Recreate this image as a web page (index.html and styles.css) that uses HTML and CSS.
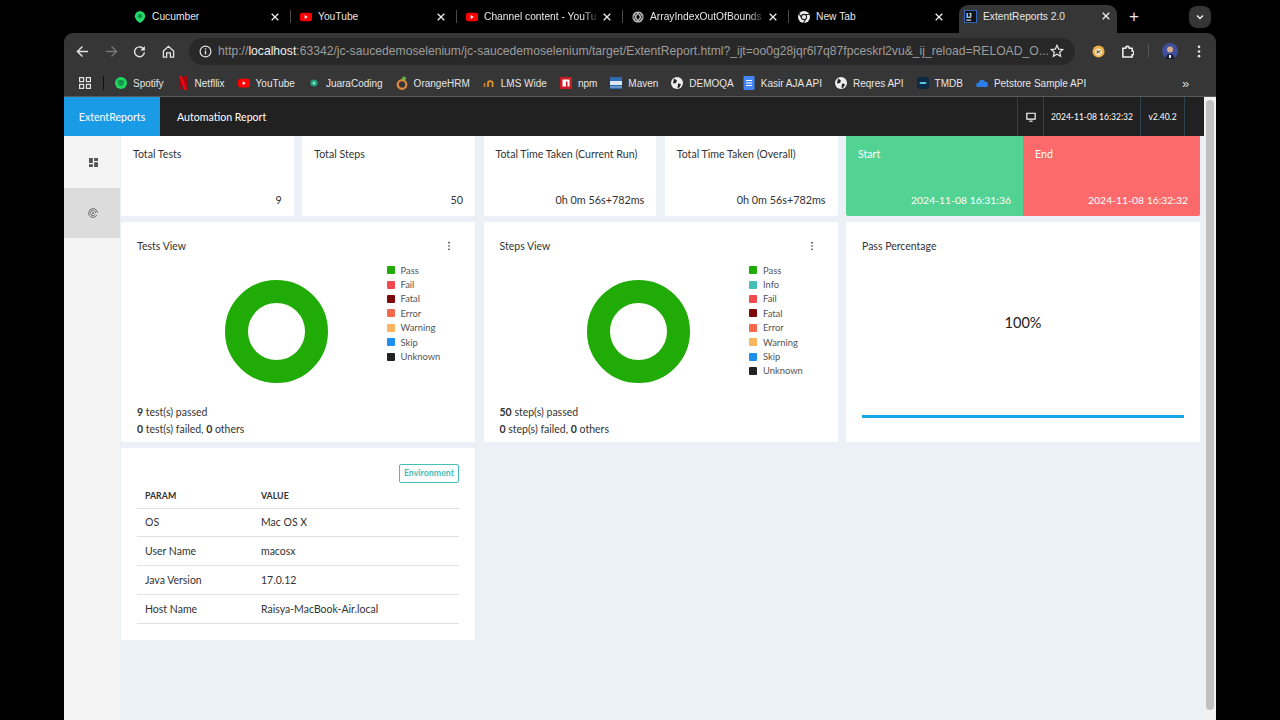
FILE: index.html
```html
<!DOCTYPE html>
<html lang="en">
<head>
    <meta charset="UTF-8">
    <title>ExtentReports 2.0</title>
    <link rel="stylesheet" href="styles.css">
</head>
<body>
<div class="window">
    <div class="tabstrip">
        <div class="tab">
            <svg class="fav" viewBox="0 0 12 14"><path d="M6 0a6 6 0 0 1 6 6c0 3.500-3 6-6 8-3-2-6-4.500-6-8a6 6 0 0 1 6-6z" fill="#23d96c"/><circle cx="6" cy="6" r="2.500" fill="#0e8f44"/></svg>
            <span class="tab-title">Cucumber</span><svg class="tab-x" viewBox="0 0 8 8"><path d="M.7.7l6.600 6.600M7.300.7L.7 7.300" stroke="#eee" stroke-width="1.300"/></svg>
        </div>
        <div class="tab">
            <svg class="fav" viewBox="0 0 14 12"><rect y="1" width="14" height="10" rx="2.500" fill="#f00"/><path d="M5.500 3.800v4.400L9 6z" fill="#fff"/></svg>
            <span class="tab-title">YouTube</span><svg class="tab-x" viewBox="0 0 8 8"><path d="M.7.7l6.600 6.600M7.300.7L.7 7.300" stroke="#eee" stroke-width="1.300"/></svg>
        </div>
        <div class="tab">
            <svg class="fav" viewBox="0 0 14 12"><rect y="1" width="14" height="10" rx="2.500" fill="#f00"/><path d="M5.500 3.800v4.400L9 6z" fill="#fff"/></svg>
            <span class="tab-title fade">Channel content - YouTu</span><svg class="tab-x" viewBox="0 0 8 8"><path d="M.7.7l6.600 6.600M7.300.7L.7 7.300" stroke="#eee" stroke-width="1.300"/></svg>
        </div>
        <div class="tab">
            <svg class="fav" viewBox="0 0 12 12"><g fill="none" stroke="#bbb" stroke-width="1.200"><circle cx="6" cy="6" r="5"/><ellipse cx="6" cy="6" rx="5" ry="2.200" transform="rotate(60 6 6)"/><ellipse cx="6" cy="6" rx="5" ry="2.200" transform="rotate(-60 6 6)"/></g></svg>
            <span class="tab-title fade">ArrayIndexOutOfBounds</span><svg class="tab-x" viewBox="0 0 8 8"><path d="M.7.7l6.600 6.600M7.300.7L.7 7.300" stroke="#eee" stroke-width="1.300"/></svg>
        </div>
        <div class="tab">
            <svg class="fav" viewBox="0 0 12 12"><circle cx="6" cy="6" r="6" fill="#eee"/><path d="M6 3.500h5.500M3.800 7.300L1 2.400M8.200 7.300L5.400 12" stroke="#222" stroke-width="1.100"/><circle cx="6" cy="6" r="2.600" fill="#eee" stroke="#222" stroke-width="1.100"/></svg>
            <span class="tab-title">New Tab</span><svg class="tab-x" viewBox="0 0 8 8"><path d="M.7.7l6.600 6.600M7.300.7L.7 7.300" stroke="#eee" stroke-width="1.300"/></svg>
        </div>
        <div class="tab tab-active">
            <svg class="fav fav-ij" viewBox="0 0 13 13"><rect width="13" height="13" fill="#111"/><path d="M0 0h13v13H0z" fill="none" stroke="#3b7de8" stroke-width="1.600"/><text x="2.200" y="7.500" font-size="6.500" font-weight="700" font-family="Liberation Sans, sans-serif" fill="#fff">IJ</text><rect x="2.200" y="9.600" width="5" height="1" fill="#fff"/></svg>
            <span class="tab-title">ExtentReports 2.0</span><svg class="tab-x" viewBox="0 0 8 8"><path d="M.7.7l6.600 6.600M7.300.7L.7 7.300" stroke="#eee" stroke-width="1.300"/></svg>
        </div>
        <span class="new-tab">+</span>
        <span class="tab-menu"><svg viewBox="0 0 10 10" width="10" height="10"><path d="M2 3.500l3 3 3-3" fill="none" stroke="#eee" stroke-width="1.500"/></svg></span>
    </div>

    <div class="toolbar">
        <svg class="tool" viewBox="0 0 14 14"><path d="M13 7H2M7 1.500L1.500 7 7 12.500" fill="none" stroke="#e4e4e4" stroke-width="1.500"/></svg>
        <svg class="tool" viewBox="0 0 14 14"><path d="M1 7h11M7 1.500L12.500 7 7 12.500" fill="none" stroke="#777" stroke-width="1.500"/></svg>
        <svg class="tool" viewBox="0 0 14 14"><path d="M11.800 5A5.300 5.300 0 1 0 12.300 8" fill="none" stroke="#e4e4e4" stroke-width="1.500"/><path d="M12.800 1v4.800H8z" fill="#e4e4e4"/></svg>
        <svg class="tool" viewBox="0 0 14 14"><path d="M1.500 6.500L7 1.500l5.500 5V13H9V8.500H5V13H1.500z" fill="none" stroke="#e4e4e4" stroke-width="1.400"/></svg>
        <div class="omnibox">
            <span class="site-info"><svg viewBox="0 0 14 14" width="13" height="13"><circle cx="7" cy="7" r="5.800" fill="none" stroke="#e4e4e4" stroke-width="1.300"/><path d="M7 6v4.200M7 3.600v1.300" stroke="#e4e4e4" stroke-width="1.400"/></svg></span>
            <span class="url">http://<b>localhost</b>:63342/jc-saucedemoselenium/jc-saucedemoselenium/target/ExtentReport.html?_ijt=oo0g28jqr6l7q87fpceskrl2vu&amp;_ij_reload=RELOAD_O...</span>
            <svg class="star" viewBox="0 0 14 14"><path d="M7 1.300l1.700 3.800 4.100.4-3.100 2.700.9 4.100L7 10.200l-3.600 2.100.9-4.100L1.200 5.500l4.100-.4z" fill="none" stroke="#e4e4e4" stroke-width="1.200"/></svg>
        </div>
        <svg class="ext" viewBox="0 0 14 14"><circle cx="7" cy="7" r="6.500" fill="#eeb04a"/><circle cx="7" cy="7.500" r="3.800" fill="#f4e6c8"/><path d="M5 6l4 3M9 6l-4 3" stroke="#5b3a1a" stroke-width="1.100"/></svg>
        <svg class="ext ext-puzzle" viewBox="0 0 14 14"><path d="M2 3.500h3a2 2 0 0 1 4 0h3v3a2 2 0 0 1 0 4V13H2z" fill="none" stroke="#eee" stroke-width="1.700"/></svg>
        <span class="tool-sep"></span>
        <svg class="avatar" viewBox="0 0 16 16"><circle cx="8" cy="8" r="8" fill="#3f4f9a"/><circle cx="8" cy="6.500" r="3" fill="#d8a98c"/><path d="M3.500 16c.5-4 2.500-5 4.500-5s4 1 4.500 5z" fill="#1a1f3a"/><rect x="7" y="12" width="2" height="3" fill="#eee"/></svg>
        <svg class="dots" viewBox="0 0 4 14"><circle cx="2" cy="2" r="1.400" fill="#e4e4e4"/><circle cx="2" cy="7" r="1.400" fill="#e4e4e4"/><circle cx="2" cy="12" r="1.400" fill="#e4e4e4"/></svg>
    </div>

    <div class="bookmarks">
        <svg class="apps" viewBox="0 0 12 12"><g fill="none" stroke="#e4e4e4" stroke-width="1.200"><rect x=".6" y=".6" width="4" height="4"/><rect x="7.400" y=".6" width="4" height="4"/><rect x=".6" y="7.400" width="4" height="4"/><rect x="7.400" y="7.400" width="4" height="4"/></g></svg>
        <span class="bm-sep"></span>
        <div class="bm"><svg viewBox="0 0 12 12"><circle cx="6" cy="6" r="6" fill="#1ed760"/><path d="M2.800 4.200c2-.6 4.500-.4 6.400.6M3.200 6c1.700-.5 3.800-.3 5.400.6M3.600 7.800c1.400-.4 3-.2 4.300.5" fill="none" stroke="#153" stroke-width="1"/></svg>Spotify</div>
        <div class="bm"><svg viewBox="0 0 12 14"><path d="M2 0h3v13.400L2 14zM7 0h3v14l-3-.6z" fill="#a3060e"/><path d="M2 0h3l5 14H7z" fill="#e50914"/></svg>Netfllix</div>
        <div class="bm"><svg viewBox="0 0 14 12"><rect y="1" width="14" height="10" rx="2.500" fill="#f00"/><path d="M5.500 3.800v4.400L9 6z" fill="#fff"/></svg>YouTube</div>
        <div class="bm"><svg viewBox="0 0 12 12"><circle cx="6" cy="6" r="3.600" fill="#1f9d7a"/><circle cx="6" cy="6" r="1.500" fill="#8fe3c8"/></svg>JuaraCoding</div>
        <div class="bm"><svg viewBox="0 0 12 14"><circle cx="6" cy="8.500" r="4.300" fill="none" stroke="#e28a3c" stroke-width="2.200"/><circle cx="8" cy="2.500" r="2" fill="#6cb33f"/></svg>OrangeHRM</div>
        <div class="bm"><svg viewBox="0 0 12 12"><path d="M1.500 10V6" stroke="#c9761f" stroke-width="1.800"/><path d="M5 10V6.500a2.300 2.300 0 0 1 4.600 0V10" fill="none" stroke="#e0912a" stroke-width="1.800"/></svg>LMS Wide</div>
        <div class="bm"><svg viewBox="0 0 12 12"><rect width="12" height="12" fill="#cb1a22"/><path d="M2.500 2.500h7v7H7.500V4.500H6v5H2.500z" fill="#fff"/></svg>npm</div>
        <div class="bm"><svg viewBox="0 0 12 12"><rect width="12" height="12" fill="#2d6bb3"/><rect y="4" width="12" height="4" fill="#dce8f5"/><rect y="9.500" width="12" height="1" fill="#a9c6e6"/></svg>Maven</div>
        <div class="bm bm-close"><svg viewBox="0 0 12 12"><circle cx="6" cy="6" r="6" fill="#eee"/><path d="M3 1.500l3 2-1 2.500-3 .5zM7 6.500l3 .5-1.500 3.500-2 .5z" fill="#222"/></svg>DEMOQA</div>
        <div class="bm"><svg viewBox="0 0 12 14"><path d="M1.500 0h9a1 1 0 0 1 1 1v12a1 1 0 0 1-1 1h-9a1 1 0 0 1-1-1V1a1 1 0 0 1 1-1z" fill="#4285f4"/><path d="M3 4.500h6M3 7h6M3 9.500h6" stroke="#fff" stroke-width="1.100"/></svg>Kasir AJA API</div>
        <div class="bm"><svg viewBox="0 0 12 12"><circle cx="6" cy="6" r="6" fill="#eee"/><path d="M3 1.500l3 2-1 2.500-3 .5zM7 6.500l3 .5-1.500 3.500-2 .5z" fill="#222"/></svg>Reqres API</div>
        <div class="bm"><svg viewBox="0 0 12 12"><rect width="12" height="12" rx="2.500" fill="#0d2a44"/><rect x="2.500" y="5" width="7" height="2" rx="1" fill="#5cc8e0"/></svg>TMDB</div>
        <div class="bm"><svg viewBox="0 0 14 10"><path d="M3.500 10a3 3 0 0 1-.5-6 4 4 0 0 1 7.600-.8A3.400 3.400 0 0 1 10.500 10z" fill="#2b7de9"/></svg>Petstore Sample API</div>
        <span class="bm-more">&raquo;</span>
    </div>

    <div class="page">
        <div class="report">
            <nav class="navbar">
                <div class="brand">ExtentReports</div>
                <div class="report-name">Automation Report</div>
                <div class="nav-info">
                    <span class="nav-cell nav-icon"><svg viewBox="0 0 12 12" width="10" height="10"><path d="M1 1.500h10v7H1z" fill="none" stroke="#fff" stroke-width="1.400"/><path d="M4 11h4" stroke="#fff" stroke-width="1.400"/></svg></span>
                    <span class="nav-cell nav-date">2024-11-08 16:32:32</span>
                    <span class="nav-cell nav-ver">v2.40.2</span>
                </div>
            </nav>
            <div class="body-row">
                <aside class="sidebar">
                    <div class="side-item"><svg viewBox="0 0 10 10" width="9" height="9"><path d="M0 0h4.300v5.500H0zM5.700 0H10v3.200H5.700zM0 7h4.300v3H0zM5.700 4.700H10V10H5.700z" fill="#555"/></svg></div>
                    <div class="side-item side-active"><svg viewBox="0 0 12 12" width="10" height="10"><path d="M10.800 8.500A5.300 5.300 0 1 1 6 .7a5.300 5.300 0 0 1 5.300 5.300" fill="none" stroke="#666" stroke-width="1.100"/><path d="M8.800 7.500A3.200 3.200 0 1 1 9.200 6" fill="none" stroke="#666" stroke-width="1.100"/><circle cx="6" cy="6" r="1.200" fill="#666"/></svg></div>
                </aside>
                <main class="content">
                    <div class="card stat"><div class="card-label">Total Tests</div><div class="stat-value">9</div></div>
                    <div class="card stat"><div class="card-label">Total Steps</div><div class="stat-value">50</div></div>
                    <div class="card stat"><div class="card-label">Total Time Taken (Current Run)</div><div class="stat-value">0h 0m 56s+782ms</div></div>
                    <div class="card stat"><div class="card-label">Total Time Taken (Overall)</div><div class="stat-value">0h 0m 56s+782ms</div></div>
                    <div class="times">
                        <div class="stat stat-start"><div class="card-label">Start</div><div class="stat-value">2024-11-08 16:31:36</div></div>
                        <div class="stat stat-end"><div class="card-label">End</div><div class="stat-value">2024-11-08 16:32:32</div></div>
                    </div>

                    <div class="card chart-card">
                        <div class="chart-head"><span>Tests View</span><svg class="kebab" viewBox="0 0 4 12"><circle cx="2" cy="2" r="1" fill="#333"/><circle cx="2" cy="6" r="1" fill="#333"/><circle cx="2" cy="10" r="1" fill="#333"/></svg></div>
                        <div class="chart-body">
                            <div class="donut"></div>
                            <ul class="legend">
                                <li><i class="c-pass"></i>Pass</li>
                                <li><i class="c-fail"></i>Fail</li>
                                <li><i class="c-fatal"></i>Fatal</li>
                                <li><i class="c-error"></i>Error</li>
                                <li><i class="c-warning"></i>Warning</li>
                                <li><i class="c-skip"></i>Skip</li>
                                <li><i class="c-unknown"></i>Unknown</li>
                            </ul>
                        </div>
                        <div class="chart-foot">
                            <div><b>9</b> test(s) passed</div>
                            <div><b>0</b> test(s) failed, <b>0</b> others</div>
                        </div>
                    </div>
                    <div class="card chart-card">
                        <div class="chart-head"><span>Steps View</span><svg class="kebab" viewBox="0 0 4 12"><circle cx="2" cy="2" r="1" fill="#333"/><circle cx="2" cy="6" r="1" fill="#333"/><circle cx="2" cy="10" r="1" fill="#333"/></svg></div>
                        <div class="chart-body">
                            <div class="donut"></div>
                            <ul class="legend">
                                <li><i class="c-pass"></i>Pass</li>
                                <li><i class="c-info"></i>Info</li>
                                <li><i class="c-fail"></i>Fail</li>
                                <li><i class="c-fatal"></i>Fatal</li>
                                <li><i class="c-error"></i>Error</li>
                                <li><i class="c-warning"></i>Warning</li>
                                <li><i class="c-skip"></i>Skip</li>
                                <li><i class="c-unknown"></i>Unknown</li>
                            </ul>
                        </div>
                        <div class="chart-foot">
                            <div><b>50</b> step(s) passed</div>
                            <div><b>0</b> step(s) failed, <b>0</b> others</div>
                        </div>
                    </div>
                    <div class="card chart-card pass-card">
                        <div class="chart-head"><span>Pass Percentage</span></div>
                        <div class="pass-value">100%</div>
                        <div class="pass-bar"></div>
                    </div>

                    <div class="card env-card">
                        <div class="env-badge-row"><span class="env-badge">Environment</span></div>
                        <table class="env-table">
                            <thead><tr><th>PARAM</th><th>VALUE</th></tr></thead>
                            <tbody>
                                <tr><td>OS</td><td>Mac OS X</td></tr>
                                <tr><td>User Name</td><td>macosx</td></tr>
                                <tr><td>Java Version</td><td>17.0.12</td></tr>
                                <tr><td>Host Name</td><td>Raisya-MacBook-Air.local</td></tr>
                            </tbody>
                        </table>
                    </div>
                </main>
            </div>
        </div>
        <div class="scrollbar"><div class="thumb"></div></div>
    </div>
</div>
</body>
</html>
```

FILE: styles.css
```css
* {
    box-sizing: border-box;
}
html, body {
    height: 100%;
}
body {
    margin: 0;
    background-color: #000;
    overflow: hidden;
    font-family: "Liberation Sans", Arial, sans-serif;
}
.window {
    width: 1152px;
    height: 720px;
    margin: 0 auto;
    display: flex;
    flex-direction: column;
}

/* tabs */
.tabstrip {
    height: 33px;
    padding-left: 60px;
    display: flex;
    align-items: flex-end;
    color: #e6e6e6;
    font-size: 10.250px;
}
.tab {
    width: 166px;
    height: 33px;
    padding-left: 10px;
    display: flex;
    align-items: center;
    position: relative;
}
.tab + .tab::before {
    content: "";
    position: absolute;
    left: 0;
    top: 10px;
    height: 13px;
    width: 1px;
    background-color: #4a4a4a;
}
.tab-active {
    background-color: #363636;
    border-radius: 9px 9px 0 0;
    width: 158px;
    height: 28px;
    margin-left: 5px;
    padding: 0 0 6px 5px;
}
.tab-active.tab::before {
    display: none;
}
.fav {
    width: 12px;
    height: 12px;
    flex: none;
}
.fav-ij {
    width: 13px;
    height: 13px;
}
.tab-title {
    margin-left: 6px;
    width: 116px;
    white-space: nowrap;
    overflow: hidden;
}
.fade {
    -webkit-mask-image: linear-gradient(to right, #000 85%, transparent);
    mask-image: linear-gradient(to right, #000 85%, transparent);
}
.tab-x {
    width: 8px;
    height: 8px;
    margin-left: 3px;
    flex: none;
}
.new-tab {
    font-size: 17px;
    align-self: center;
    color: #eee;
    margin-left: 12px;
}
.tab-menu {
    width: 22px;
    height: 22px;
    border-radius: 8px;
    background-color: #363636;
    display: flex;
    align-items: center;
    justify-content: center;
    align-self: center;
    margin-left: 50px;
}

/* toolbar */
.toolbar {
    height: 36px;
    background-color: #363636;
    border-radius: 9px 9px 0 0;
    padding: 0 13px 0 12px;
    display: flex;
    align-items: center;
}
.tool {
    width: 13px;
    height: 13px;
    margin-right: 15.500px;
    flex: none;
}
.omnibox {
    width: 886px;
    height: 27px;
    margin-left: -1px;
    padding: 0 11px 0 5px;
    border-radius: 14px;
    background-color: #282828;
    display: flex;
    align-items: center;
    font-size: 12.150px;
    color: #9d9d9d;
}
.site-info {
    width: 22px;
    display: flex;
    justify-content: center;
}
.url {
    flex: 1;
    margin-left: 2px;
    white-space: nowrap;
    overflow: hidden;
}
.url b {
    font-weight: 400;
    color: #eee;
}
.star {
    width: 14px;
    height: 14px;
}
.ext {
    width: 13px;
    height: 13px;
    margin-left: 17px;
}
.ext-puzzle {
    margin-left: 16px;
}
.tool-sep {
    width: 1px;
    height: 14px;
    background-color: #555;
    margin-left: 14px;
}
.avatar {
    width: 16px;
    height: 16px;
    margin-left: 13px;
}
.dots {
    width: 4px;
    height: 13px;
    margin-left: 19px;
}

/* bookmarks */
.bookmarks {
    height: 28px;
    background-color: #363636;
    border-bottom: 1px solid #5a5a5a;
    padding: 1px 0 0 15px;
    display: flex;
    align-items: center;
    color: #e6e6e6;
    font-size: 10px;
}
.apps {
    width: 12px;
    height: 12px;
}
.bm-sep {
    width: 1px;
    height: 14px;
    background-color: #111;
    margin: 0 11px 0 12px;
}
.bm {
    display: flex;
    align-items: center;
    margin-right: 13px;
    white-space: nowrap;
}
.bm-close {
    margin-right: 9px;
}
.bm svg {
    width: 12px;
    height: auto;
    margin-right: 6px;
    flex: none;
}
.bm-more {
    position: absolute;
    left: 1182px;
    font-size: 13px;
    color: #ddd;
}

/* report */
.page {
    flex: 1;
    min-height: 0;
    display: flex;
    background-color: #fff;
}
.report {
    flex: 1;
    min-width: 0;
    display: flex;
    flex-direction: column;
    font-family: Lato, "Noto Sans", sans-serif;
    color: #333;
}
.navbar {
    height: 39px;
    background-color: #212121;
    display: flex;
    align-items: stretch;
    color: #fff;
    font-size: 10.600px;
}
.brand {
    width: 96px;
    background-color: #1a9be6;
    display: flex;
    align-items: center;
    justify-content: center;
}
.report-name {
    margin-left: 17px;
    display: flex;
    align-items: center;
}
.nav-info {
    margin-left: auto;
    margin-right: 19px;
    display: flex;
    font-size: 8.500px;
}
.nav-cell {
    display: flex;
    align-items: center;
    justify-content: center;
    border-left: 1px solid #2c4450;
}
.nav-icon {
    width: 26px;
}
.nav-date {
    width: 97px;
}
.nav-ver {
    width: 45px;
    border-right: 1px solid #2c4450;
}
.body-row {
    flex: 1;
    min-height: 0;
    display: flex;
}
.sidebar {
    width: 56px;
    background-color: #f4f4f4;
}
.side-item {
    height: 52px;
    padding-left: 2px;
    display: flex;
    align-items: center;
    justify-content: center;
}
.side-active {
    height: 50px;
    background-color: #dcdcdc;
}
.content {
    flex: 1;
    background-color: #ecf0f7;
    padding: 0 4px 0 1px;
    display: grid;
    grid-template-columns: repeat(12, 1fr);
    grid-template-rows: 80px 220px 192px;
    align-content: start;
    gap: 6px 8.500px;
}
.card {
    background-color: #fff;
    grid-column: span 2;
}
.stat {
    padding: 12px 12px 10px;
    display: flex;
    flex-direction: column;
    justify-content: space-between;
    font-size: 10.600px;
}
.stat-value {
    text-align: right;
    font-size: 10.800px;
}
.times {
    grid-column: span 4;
    display: flex;
}
.times .stat-value {
    font-size: 10.400px;
}
.stat-start, .stat-end {
    flex: 1;
    color: #fff;
}
.stat-start {
    background-color: #52d293;
    border-radius: 0 0 0 2px;
}
.stat-end {
    background-color: #fc6a6b;
    border-radius: 0 0 2px 0;
}

/* charts */
.chart-card {
    grid-column: span 4;
    padding: 17px 16px 5px 16px;
    display: flex;
    flex-direction: column;
    font-size: 10.500px;
}
.chart-head {
    display: flex;
    justify-content: space-between;
    align-items: center;
    height: 14px;
    padding-right: 8px;
}
.kebab {
    width: 4px;
    height: 10px;
}
.chart-body {
    flex: 1;
    display: flex;
}
.donut {
    width: 103px;
    height: 103px;
    border-radius: 50%;
    border: 23px solid #21ab07;
    margin: 27px 0 0 87.500px;
}
.legend {
    list-style: none;
    margin: 10px 0 0 59px;
    padding: 0;
    font-size: 9.400px;
    color: #555;
}
.legend li {
    height: 14.400px;
    display: flex;
    align-items: center;
}
.legend i {
    width: 8px;
    height: 8px;
    border-radius: 1px;
    margin-right: 6px;
}
.c-pass { background-color: #21ab07; }
.c-info { background-color: #46bdb6; }
.c-fail { background-color: #f24a4f; }
.c-fatal { background-color: #7c0a0a; }
.c-error { background-color: #f7694d; }
.c-warning { background-color: #fbb55e; }
.c-skip { background-color: #1f8ef1; }
.c-unknown { background-color: #222; }
.chart-foot {
    line-height: 16.500px;
}
.chart-foot b {
    font-weight: 700;
}
.pass-value {
    text-align: center;
    font-size: 14.500px;
    margin-top: 61px;
    color: #222;
}
.pass-bar {
    height: 3px;
    background-color: #15a9ea;
    margin-top: 84px;
}

/* environment */
.env-card {
    grid-column: span 4;
    padding: 16px 16px 0;
    font-size: 10.500px;
}
.env-badge-row {
    text-align: right;
    height: 19px;
}
.env-badge {
    display: inline-block;
    height: 19px;
    line-height: 16px;
    padding: 0 4px;
    font-size: 8.800px;
    font-weight: 700;
    color: #46bdb6;
    border: 1px solid #46bdb6;
    border-radius: 2px;
}
.env-table {
    width: 100%;
    border-collapse: collapse;
}
.env-table th {
    text-align: left;
    font-size: 8.800px;
    font-weight: 700;
    height: 25px;
    padding: 0 8px;
    border-bottom: 1px solid #dee2e6;
}
.env-table td {
    height: 28.800px;
    padding: 0 8px;
    border-bottom: 1px solid #dee2e6;
}
.env-table th:first-child {
    width: 116px;
}

/* scrollbar */
.scrollbar {
    width: 12px;
    background-color: #f1f1f1;
    padding: 3px 2px 10px;
}
.thumb {
    height: 100%;
    border-radius: 4px;
    background-color: #c0c0c0;
}
```
